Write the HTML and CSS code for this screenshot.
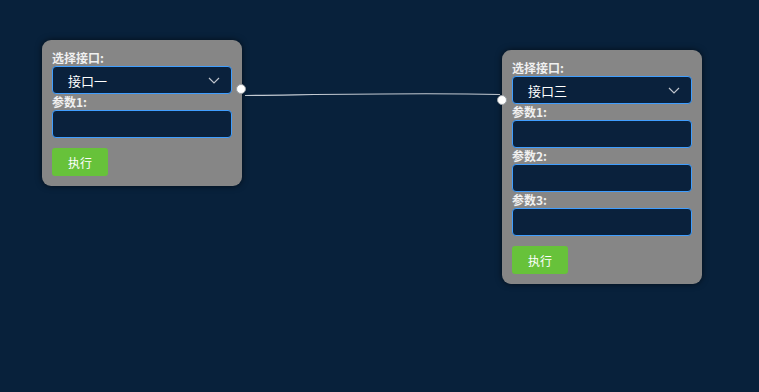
FILE: index.html
```html
<!DOCTYPE html>
<html lang="zh">
<head>
<meta charset="utf-8">
<link rel="stylesheet" href="styles.css">
</head>
<body>
<div class="canvas">
  <svg class="edges" width="759" height="392" viewBox="0 0 759 392">
    <path d="M245 95.5 C 330 94.5, 420 92.5, 500 94.5" fill="none" stroke="#c3cad2" stroke-width="1.2"/>
  </svg>

  <div class="node node-a">
    <div class="label">选择接口:</div>
    <div class="select">
      <span>接口一</span>
      <svg class="arrow" width="12" height="7" viewBox="0 0 12 7"><path d="M1 1 L6 6 L11 1" fill="none" stroke="#c0c4cc" stroke-width="1.2"/></svg>
    </div>
    <div class="label">参数1:</div>
    <div class="input"></div>
    <button class="btn">执行</button>
    <span class="port port-out"></span>
  </div>

  <div class="node node-b">
    <div class="label">选择接口:</div>
    <div class="select">
      <span>接口三</span>
      <svg class="arrow" width="12" height="7" viewBox="0 0 12 7"><path d="M1 1 L6 6 L11 1" fill="none" stroke="#c0c4cc" stroke-width="1.2"/></svg>
    </div>
    <div class="label">参数1:</div>
    <div class="input"></div>
    <div class="label">参数2:</div>
    <div class="input"></div>
    <div class="label">参数3:</div>
    <div class="input"></div>
    <button class="btn">执行</button>
    <span class="port port-in"></span>
  </div>
</div>
</body>
</html>
```
FILE: styles.css
```css
* { box-sizing: border-box; }
html, body {
  margin: 0;
  padding: 0;
  width: 759px;
  height: 392px;
  overflow: hidden;
  background: #08213b;
  font-family: "Noto Sans CJK SC", "Noto Sans", sans-serif;
}
.canvas {
  position: relative;
  width: 759px;
  height: 392px;
}
.edges {
  position: absolute;
  left: 0;
  top: 0;
}
.node {
  position: absolute;
  width: 200px;
  padding: 10px;
  background: #868686;
  border-radius: 9px;
  box-shadow: 0 0 6px rgba(0, 0, 0, 0.6);
  display: flex;
  flex-direction: column;
}
.node-a { left: 42px; top: 40px; }
.node-b { left: 502px; top: 50px; }
.label {
  height: 16px;
  line-height: 16px;
  font-size: 12px;
  font-weight: bold;
  color: #f0f0f0;
}
.select, .input {
  height: 28px;
  border: 1px solid #409eff;
  border-radius: 4px;
  background: #0a213c;
}
.select {
  display: flex;
  align-items: center;
  justify-content: space-between;
  padding: 0 11px 0 15px;
  color: #ffffff;
  font-size: 13px;
}
.arrow { display: block; }
.btn {
  margin-top: 10px;
  width: 56px;
  height: 28px;
  border: none;
  border-radius: 3px;
  background: #67c23a;
  color: #ffffff;
  font-family: "Noto Sans CJK SC", "Noto Sans", sans-serif;
  font-size: 12px;
  padding: 0;
}
.port {
  position: absolute;
  width: 10px;
  height: 10px;
  border-radius: 50%;
  background: #ffffff;
  border: 1px solid #9aa0a6;
}
.port-out { right: -4px; top: 44px; }
.port-in { left: -5px; top: 45px; }
```
